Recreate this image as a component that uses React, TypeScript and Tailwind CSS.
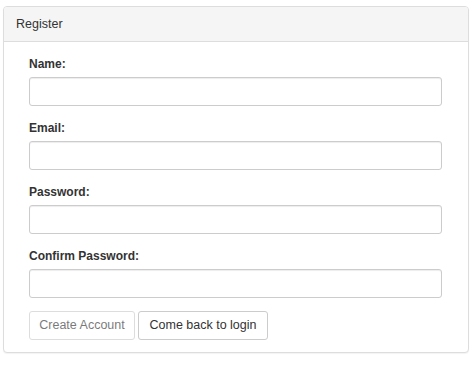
import React from "react";

const fields = ["Name:", "Email:", "Password:", "Confirm Password:"];

export default function App() {
  return (
    <div className="w-[474px] h-[387px] bg-white pt-[6px] pl-[3px] text-[#333] text-[12px] leading-[17px] [font-family:'Liberation_Sans',Arial,sans-serif]">
      <div className="w-[466px] border border-[#ddd] rounded-[4px] bg-white shadow-[0_1px_1px_rgba(0,0,0,0.05)]">
        <div className="bg-[#f5f5f5] border-b border-[#ddd] rounded-t-[3px] px-[12px] pt-[9px] pb-[8px] text-[12.5px]">
          Register
        </div>
        <div className="pl-[25px] pr-[26px] pt-[14px] pb-[12px]">
          {fields.map((f, i) => (
            <div key={f} className={i === fields.length - 1 ? "mb-[13px]" : "mb-[14px]"}>
              <label className="block font-bold mb-[4px]">{f}</label>
              <input
                type={f.startsWith("Password") || f.startsWith("Confirm") ? "password" : "text"}
                className="block w-full h-[29px] border border-[#ccc] rounded-[3px] bg-white shadow-[inset_0_1px_1px_rgba(0,0,0,0.075)] outline-none px-[10px]"
              />
            </div>
          ))}
          <div className="flex gap-[3px]">
            <button
              disabled
              className="w-[106px] h-[29px] border border-[#ccc] rounded-[3px] bg-white text-[#333] opacity-65 text-[12.5px]"
            >
              Create Account
            </button>
            <button className="w-[130px] h-[29px] border border-[#ccc] rounded-[3px] bg-white text-[#333] text-[12.5px]">
              Come back to login
            </button>
          </div>
        </div>
      </div>
    </div>
  );
}
